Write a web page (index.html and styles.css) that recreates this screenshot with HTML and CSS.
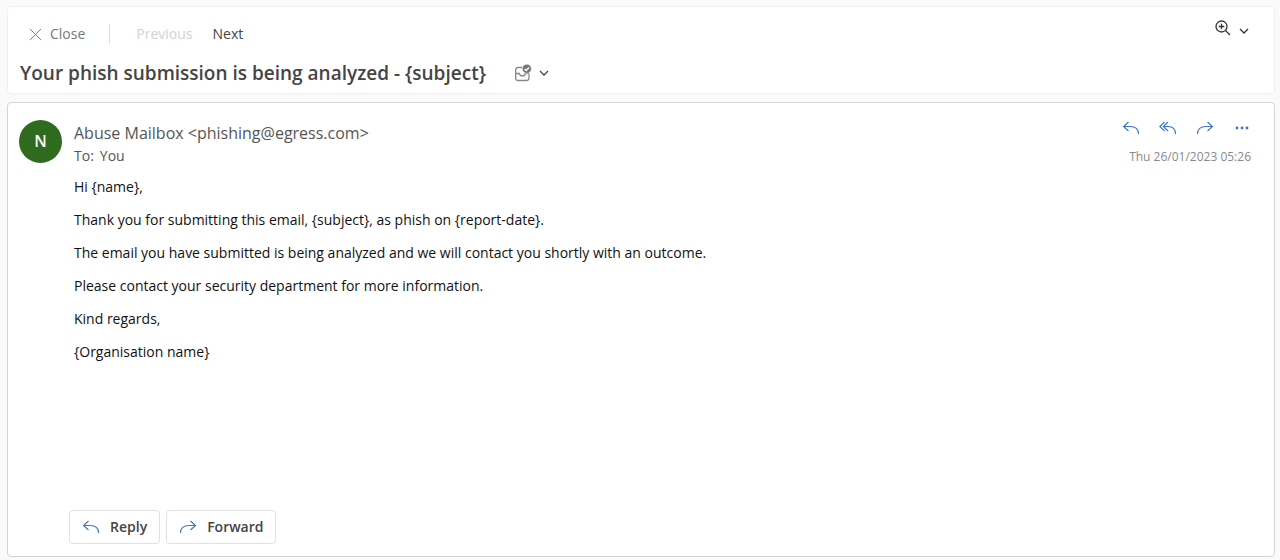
FILE: index.html
```html
<!DOCTYPE html>
<html lang="en">
<head>
    <meta charset="utf-8">
    <title>Your phish submission is being analyzed</title>
    <link rel="stylesheet" href="styles.css">
</head>
<body>
    <!-- shared arrow shapes -->
    <svg class="sprite" aria-hidden="true">
        <symbol id="icon-reply" viewBox="0 0 18 16">
            <path d="M6.5 2 L1.5 6.5 L6.5 11 M1.5 6.5 H8 C13.5 6.5 16.5 9 16.5 14"/>
        </symbol>
        <symbol id="icon-reply-all" viewBox="0 0 18 16">
            <path d="M5.5 2 L0.8 6.5 L5.5 11 M9 2 L4.3 6.5 L9 11 M4.3 6.5 H9 C14 6.5 16.5 9 16.5 14"/>
        </symbol>
        <symbol id="icon-forward" viewBox="0 0 18 16">
            <path d="M11.5 2 L16.5 6.5 L11.5 11 M16.5 6.5 H10 C4.5 6.5 1.5 9 1.5 14"/>
        </symbol>
        <symbol id="icon-chevron" viewBox="0 0 10 10">
            <path d="M1 3 L5 7 L9 3"/>
        </symbol>
    </svg>

    <header class="card toolbar">
        <div class="toolbar-row">
            <button class="tool close" type="button">
                <svg class="icon-close" viewBox="0 0 14 14"><path d="M1 1 L13 13 M13 1 L1 13"/></svg>
                Close
            </button>
            <span class="divider"></span>
            <button class="tool" type="button" disabled>Previous</button>
            <button class="tool" type="button">Next</button>
            <button class="tool zoom" type="button" aria-label="Zoom">
                <svg class="icon-zoom" viewBox="0 0 16 16"><circle cx="6.5" cy="6.5" r="5.5"/><path d="M6.5 3.7 V9.3 M3.7 6.5 H9.3 M10.5 10.5 L15 15"/></svg>
                <svg class="icon-chevron"><use href="#icon-chevron"/></svg>
            </button>
        </div>
        <div class="subject-row">
            <h1>Your phish submission is being analyzed - {subject}</h1>
            <button class="tool inbox" type="button" aria-label="Inbox">
                <svg class="icon-inbox" viewBox="0 0 18 18">
                    <path d="M8 3.5 H4 Q1.7 3.5 1.7 6 V14 Q1.7 16.5 4 16.5 H12.5 Q15 16.5 15 14 V9.5 M1.7 9.5 H5.3 Q6 12 8.3 12 Q10.7 12 11.3 9.5 H15"/>
                    <circle class="badge" cx="12.8" cy="4.8" r="4.6"/>
                    <path class="tick" d="M10.6 5 L12.1 6.5 L15 3.5"/>
                </svg>
                <svg class="icon-chevron"><use href="#icon-chevron"/></svg>
            </button>
        </div>
    </header>

    <main class="card message">
        <div class="avatar">N</div>
        <div class="content">
            <div class="message-head">
                <div class="people">
                    <div class="sender">Abuse Mailbox &lt;phishing@egress.com&gt;</div>
                    <div class="recipient"><span>To:</span><span>You</span></div>
                </div>
                <div class="meta">
                    <div class="actions">
                        <button type="button" aria-label="Reply"><svg class="icon-arrow"><use href="#icon-reply"/></svg></button>
                        <button type="button" aria-label="Reply all"><svg class="icon-arrow"><use href="#icon-reply-all"/></svg></button>
                        <button type="button" aria-label="Forward"><svg class="icon-arrow"><use href="#icon-forward"/></svg></button>
                        <button type="button" aria-label="More actions"><svg class="icon-more" viewBox="0 0 18 16"><circle cx="4" cy="8" r="1.4"/><circle cx="9" cy="8" r="1.4"/><circle cx="14" cy="8" r="1.4"/></svg></button>
                    </div>
                    <time datetime="2023-01-26T05:26">Thu 26/01/2023 05:26</time>
                </div>
            </div>
            <div class="body">
                <p>Hi {name},</p>
                <p>Thank you for submitting this email, {subject}, as phish on {report-date}.</p>
                <p>The email you have submitted is being analyzed and we will contact you shortly with an outcome.</p>
                <p>Please contact your security department for more information.</p>
                <p>Kind regards,</p>
                <p>{Organisation name}</p>
            </div>
            <div class="respond">
                <button type="button"><svg class="icon-arrow"><use href="#icon-reply"/></svg>Reply</button>
                <button type="button"><svg class="icon-arrow"><use href="#icon-forward"/></svg>Forward</button>
            </div>
        </div>
    </main>
</body>
</html>
```
FILE: styles.css
```css
* {
    box-sizing: border-box;
}

body {
    display: flex;
    flex-direction: column;
    gap: 8px;
    min-height: 100vh;
    margin: 0;
    padding: 6px 5px 3px 7px;
    background-color: #fafafa;
    color: #111;
    font-family: "Open Sans", "Noto Sans", sans-serif;
    font-size: 14px;
    line-height: 20px;
}

button {
    padding: 0;
    border: none;
    background: none;
    color: inherit;
    font: inherit;
    cursor: pointer;
}

svg {
    display: block;
    flex: none;
    fill: none;
    stroke: currentColor;
}

.sprite {
    position: absolute;
    width: 0;
    height: 0;
}

.card {
    background-color: #fff;
    border: 1px solid #f0f0f0;
    border-radius: 4px;
}

/* top bar */

.toolbar {
    padding: 13px 25px 6px 12px;
}

.toolbar-row {
    display: flex;
    align-items: flex-end;
    height: 24px;
    padding-left: 9px;
}

.tool {
    display: flex;
    align-items: center;
    gap: 8px;
    color: #444;
}

.tool:disabled {
    color: #d2d2d2;
    cursor: default;
    margin-right: 20px;
}

.close {
    color: #777;
}

.divider {
    width: 1px;
    height: 20px;
    margin: 0 26px 0 24px;
    background-color: #ddd;
}

.zoom {
    align-self: flex-start;
    margin-left: auto;
    color: #333;
}

.icon-close {
    width: 13px;
    height: 13px;
}

.icon-zoom {
    width: 16px;
    height: 16px;
    stroke-width: 1.3;
}

.icon-chevron {
    width: 10px;
    height: 10px;
    stroke-width: 1.3;
}

.zoom .icon-chevron {
    align-self: flex-end;
}

.icon-inbox {
    width: 18px;
    height: 18px;
    color: #888;
    stroke-width: 1.3;
}

.icon-inbox .badge {
    fill: #777;
    stroke: #fff;
    stroke-width: 0.5;
}

.icon-inbox .tick {
    stroke: #fff;
}

.subject-row {
    display: flex;
    align-items: center;
    gap: 28px;
    margin-top: 15px;
}

h1 {
    margin: 0;
    color: #444;
    font-size: 19px;
    font-weight: 600;
    line-height: 28px;
}

.inbox {
    gap: 7px;
}

/* message */

.message {
    display: flex;
    flex: 1;
    gap: 12px;
    padding: 17px 23px 12px 11px;
    border-color: #d4d4d4;
}

.avatar {
    flex: none;
    width: 43px;
    height: 43px;
    border-radius: 50%;
    background-color: #2e6b1f;
    color: #fff;
    font-size: 16px;
    font-weight: 600;
    line-height: 43px;
    text-align: center;
}

.content {
    display: flex;
    flex: 1;
    flex-direction: column;
}

.message-head {
    display: flex;
    justify-content: space-between;
    color: #555;
}

.sender {
    font-size: 16px;
    line-height: 26px;
}

.recipient {
    display: flex;
    gap: 6px;
}

.meta {
    color: #8a8a8a;
    font-size: 12px;
    text-align: right;
}

.actions {
    display: flex;
    justify-content: flex-end;
    gap: 19px;
    padding-bottom: 11px;
    color: #3a76c8;
}

.icon-arrow,
.icon-more {
    width: 18px;
    height: 16px;
    stroke-width: 1.1;
}

.icon-more {
    fill: currentColor;
    stroke: none;
}

.body {
    padding-top: 10px;
}

.body p {
    margin: 0 0 13px;
}

.respond {
    display: flex;
    gap: 6px;
    margin-top: auto;
    margin-left: -5px;
}

.respond button {
    display: flex;
    align-items: center;
    gap: 10px;
    height: 34px;
    padding: 0 12px;
    border: 1px solid #e1e1e1;
    border-radius: 4px;
    color: #444;
    font-weight: 600;
}

.respond .icon-arrow {
    color: #3a76c8;
}
```
